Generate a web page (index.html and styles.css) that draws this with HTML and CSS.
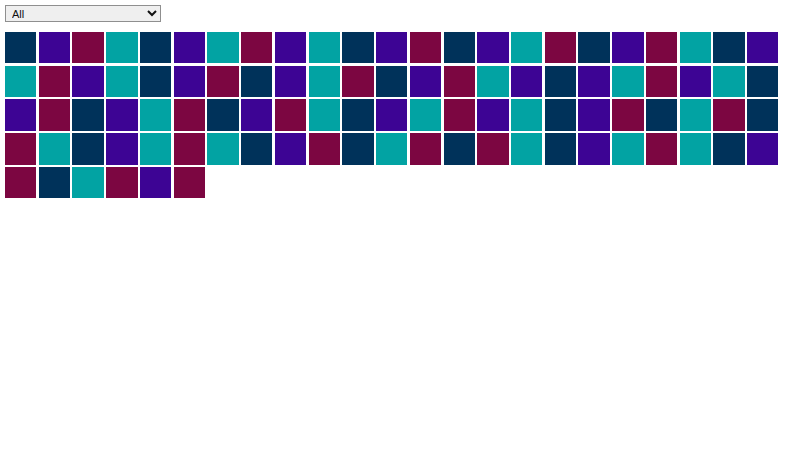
FILE: index.html
```html
<!DOCTYPE html>
<html>
<head>
<meta charset="utf-8">
<link rel="stylesheet" href="styles.css">
</head>
<body>
<div class="toolbar">
  <select class="filter">
    <option>All</option>
    <option>Navy</option>
    <option>Purple</option>
    <option>Maroon</option>
    <option>Teal</option>
  </select>
</div>
<div class="grid">
  <div class="tile n"></div><div class="tile p"></div><div class="tile m"></div><div class="tile t"></div><div class="tile n"></div><div class="tile p"></div><div class="tile t"></div><div class="tile m"></div><div class="tile p"></div><div class="tile t"></div><div class="tile n"></div><div class="tile p"></div><div class="tile m"></div><div class="tile n"></div><div class="tile p"></div><div class="tile t"></div><div class="tile m"></div><div class="tile n"></div><div class="tile p"></div><div class="tile m"></div><div class="tile t"></div><div class="tile n"></div><div class="tile p"></div>
  <div class="tile t"></div><div class="tile m"></div><div class="tile p"></div><div class="tile t"></div><div class="tile n"></div><div class="tile p"></div><div class="tile m"></div><div class="tile n"></div><div class="tile p"></div><div class="tile t"></div><div class="tile m"></div><div class="tile n"></div><div class="tile p"></div><div class="tile m"></div><div class="tile t"></div><div class="tile p"></div><div class="tile n"></div><div class="tile p"></div><div class="tile t"></div><div class="tile m"></div><div class="tile p"></div><div class="tile t"></div><div class="tile n"></div>
  <div class="tile p"></div><div class="tile m"></div><div class="tile n"></div><div class="tile p"></div><div class="tile t"></div><div class="tile m"></div><div class="tile n"></div><div class="tile p"></div><div class="tile m"></div><div class="tile t"></div><div class="tile n"></div><div class="tile p"></div><div class="tile t"></div><div class="tile m"></div><div class="tile p"></div><div class="tile t"></div><div class="tile n"></div><div class="tile p"></div><div class="tile m"></div><div class="tile n"></div><div class="tile t"></div><div class="tile m"></div><div class="tile n"></div>
  <div class="tile m"></div><div class="tile t"></div><div class="tile n"></div><div class="tile p"></div><div class="tile t"></div><div class="tile m"></div><div class="tile t"></div><div class="tile n"></div><div class="tile p"></div><div class="tile m"></div><div class="tile n"></div><div class="tile t"></div><div class="tile m"></div><div class="tile n"></div><div class="tile m"></div><div class="tile t"></div><div class="tile n"></div><div class="tile p"></div><div class="tile t"></div><div class="tile m"></div><div class="tile t"></div><div class="tile n"></div><div class="tile p"></div>
  <div class="tile m"></div><div class="tile n"></div><div class="tile t"></div><div class="tile m"></div><div class="tile p"></div><div class="tile m"></div>
</div>
</body>
</html>
```
FILE: styles.css
```css
html, body {
  background: #ffffff;
}
body {
  margin: 5px;
  font-family: "Liberation Sans", Arial, sans-serif;
}
.toolbar {
  display: flex;
  height: 17px;
}
.filter {
  width: 156px;
  height: 17px;
  margin: 0;
  padding: 0 0 0 2px;
  font-family: "Liberation Sans", Arial, sans-serif;
  font-size: 11px;
  color: #111;
  background-color: #efefef;
  border: 1px solid #8f8f8f;
  border-radius: 0;
  box-sizing: border-box;
}
.grid {
  margin-top: 10px;
  display: grid;
  grid-template-columns: repeat(23, 31.3px);
  grid-auto-rows: 31.3px;
  gap: 2.45px;
}
.tile {
  width: 31.3px;
  height: 31.3px;
}
.n { background: #00325a; }
.p { background: #3d0494; }
.m { background: #7c0641; }
.t { background: #02a3a3; }
```
